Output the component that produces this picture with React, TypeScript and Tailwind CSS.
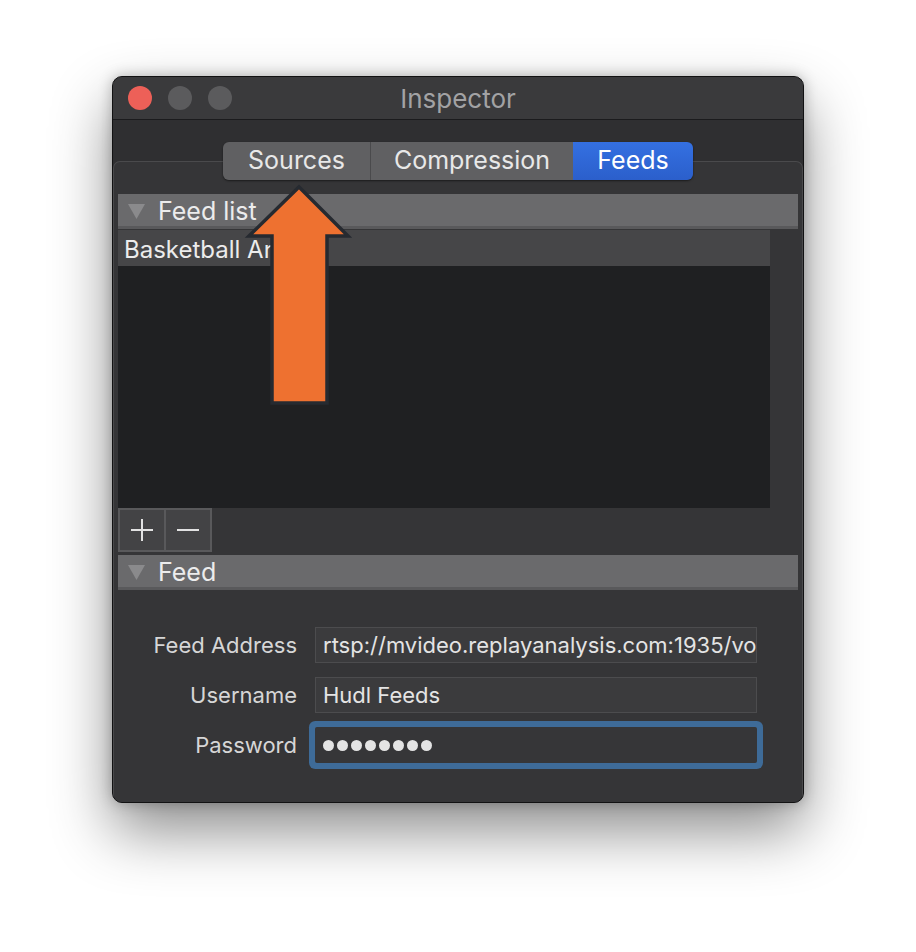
import React from "react";

const font = { fontFamily: "Inter, 'Noto Sans', 'Liberation Sans', sans-serif" };

function Disclosure() {
  return (
    <svg width="17" height="15" viewBox="0 0 17 15" className="shrink-0">
      <polygon points="0,0 17,0 8.5,15" fill="#8a8a8c" />
    </svg>
  );
}

function SectionHeader({ title }: { title: string }) {
  return (
    <div className="flex items-center gap-[13px] h-[35px] pl-[10px] pt-[2px] bg-[#6a6a6c] border-b-[3px] border-[#59595b]">
      <Disclosure />
      <span className="text-[25px] leading-none text-[#ececec]">{title}</span>
    </div>
  );
}

function Field({ label, children, focused }: { label: string; children: React.ReactNode; focused?: boolean }) {
  return (
    <div className="flex items-center">
      <div className="w-[179px] text-right text-[22px] text-[#d6d6d6] leading-none">{label}</div>
      <div
        className={
          focused
            ? "ml-[18px] w-[442px] h-[36px] flex items-center pl-[8px] bg-[#363638] rounded-[2px] shadow-[0_0_0_6px_#3e6b98]"
            : "ml-[18px] w-[442px] h-[36px] flex items-center pl-[7px] bg-[#3b3b3d] border border-[#4c4c4e] overflow-hidden whitespace-nowrap"
        }
      >
        {children}
      </div>
    </div>
  );
}

export default function App() {
  const tabs = [
    { name: "Sources", w: "w-[147px]" },
    { name: "Compression", w: "w-[203px]" },
  ];

  return (
    <div className="min-h-[952px] bg-white pt-[76px] pl-[112px]" style={font}>
      <div className="relative w-[692px] h-[727px] flex flex-col rounded-[10px] bg-[#2f2f31] border border-[#121213] shadow-[0_28px_60px_rgba(0,0,0,0.45),0_0_14px_rgba(0,0,0,0.25)] overflow-hidden">
        {/* title bar */}
        <div className="h-[43px] shrink-0 grid grid-cols-[1fr_auto_1fr] items-center bg-[#3a3a3c] border-b border-[#1b1b1d]">
          <div className="flex items-center gap-[16px] pl-[15px]">
            <div className="w-[24px] h-[24px] rounded-full bg-[#ed6058]" />
            <div className="w-[24px] h-[24px] rounded-full bg-[#5b5b5d]" />
            <div className="w-[24px] h-[24px] rounded-full bg-[#5b5b5d]" />
          </div>
          <div className="pt-[2px] text-[26px] leading-none text-[#a2a2a4]">Inspector</div>
          <div />
        </div>

        {/* tab view */}
        <div className="flex-1 flex flex-col pt-[41px]">
          <div className="flex-1 flex flex-col px-[4px] bg-[#353537] border-t border-x border-[#4a4a4c] rounded-t-[7px]">
            <div className="-mt-[20px] self-center h-[38px] flex rounded-[6px] overflow-hidden shadow-[0_1px_2px_rgba(0,0,0,0.5)]">
              {tabs.map((t, i) => (
                <div
                  key={t.name}
                  className={`${t.w} flex items-center justify-center bg-[#606062] text-[25px] text-[#e8e8e8] ${i > 0 ? "border-l border-[#4a4a4c]" : ""}`}
                >
                  {t.name}
                </div>
              ))}
              <div className="w-[120px] flex items-center justify-center bg-gradient-to-b from-[#3470e2] to-[#2b5fcb] text-[25px] text-white">
                Feeds
              </div>
            </div>

            <div className="mt-[14px]">
              <SectionHeader title="Feed list" />
            </div>

            <div className="mt-[1px] w-[652px] h-[278px] bg-[#1f2022]">
              <div className="h-[36px] flex items-center pl-[6px] pt-[4px] bg-[#464648] text-[24px] leading-none text-[#ececec] whitespace-nowrap">
                Basketball Angle 1
              </div>
            </div>

            <div className="flex w-[94px] h-[44px]">
              <div className="flex-1 flex items-center justify-center bg-[#434345] border-2 border-[#59595b]">
                <svg width="24" height="24" viewBox="0 0 24 24" stroke="#e2e2e2" strokeWidth="2">
                  <path d="M12 1v22M1 12h22" />
                </svg>
              </div>
              <div className="flex-1 flex items-center justify-center bg-[#434345] border-2 border-l-0 border-[#59595b]">
                <svg width="24" height="24" viewBox="0 0 24 24" stroke="#e2e2e2" strokeWidth="2">
                  <path d="M1 12h22" />
                </svg>
              </div>
            </div>

            <div className="mt-[3px]">
              <SectionHeader title="Feed" />
            </div>

            <div className="mt-[37px] flex flex-col gap-[14px]">
              <Field label="Feed Address">
                <span className="text-[22px] text-[#e4e4e4] leading-none">rtsp://mvideo.replayanalysis.com:1935/vod</span>
              </Field>
              <Field label="Username">
                <span className="text-[22px] text-[#e4e4e4] leading-none">Hudl Feeds</span>
              </Field>
              <Field label="Password" focused>
                <div className="flex gap-[3px]">
                  {Array.from({ length: 8 }).map((_, i) => (
                    <div key={i} className="w-[11px] h-[11px] rounded-full bg-[#e4e4e4]" />
                  ))}
                </div>
              </Field>
            </div>
          </div>
        </div>

        {/* annotation arrow */}
        <svg
          className="absolute left-0 top-0 pointer-events-none"
          width="692"
          height="727"
          viewBox="0 0 692 727"
        >
          <polygon
            points="186,110 235,159 214,159 214,326 159,326 159,159 136,159"
            fill="#ee7130"
            stroke="#262a30"
            strokeWidth="3.5"
            strokeLinejoin="miter"
          />
        </svg>
      </div>
    </div>
  );
}
